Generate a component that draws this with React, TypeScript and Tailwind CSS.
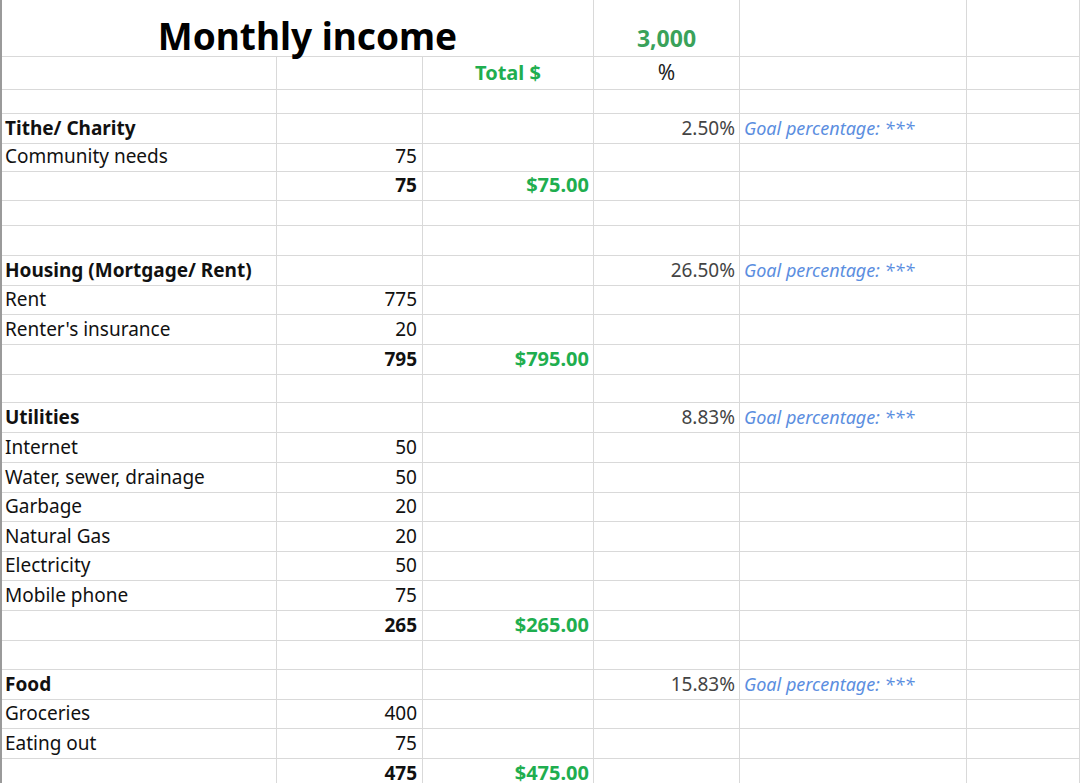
import React from "react";

type Row = {
  h: number;
  a?: string;
  aBold?: boolean;
  b?: string;
  bBold?: boolean;
  c?: string;
  d?: string;
  goal?: boolean;
};

const rows: Row[] = [
  { h: 29, c: "Total $" },
  { h: 28 },
  { h: 28, a: "Tithe/ Charity", aBold: true, d: "2.50%", goal: true },
  { h: 28, a: "Community needs", b: "75" },
  { h: 28, b: "75", bBold: true, c: "$75.00" },
  { h: 28 },
  { h: 30 },
  { h: 29, a: "Housing (Mortgage/ Rent)", aBold: true, d: "26.50%", goal: true },
  { h: 30, a: "Rent", b: "775" },
  { h: 29, a: "Renter's insurance", b: "20" },
  { h: 30, b: "795", bBold: true, c: "$795.00" },
  { h: 29 },
  { h: 30, a: "Utilities", aBold: true, d: "8.83%", goal: true },
  { h: 30, a: "Internet", b: "50" },
  { h: 29, a: "Water, sewer, drainage", b: "50" },
  { h: 30, a: "Garbage", b: "20" },
  { h: 29, a: "Natural Gas", b: "20" },
  { h: 30, a: "Electricity", b: "50" },
  { h: 29, a: "Mobile phone", b: "75" },
  { h: 30, b: "265", bBold: true, c: "$265.00" },
  { h: 30 },
  { h: 29, a: "Food", aBold: true, d: "15.83%", goal: true },
  { h: 30, a: "Groceries", b: "400" },
  { h: 29, a: "Eating out", b: "75" },
  { h: 30, b: "475", bBold: true, c: "$475.00" },
];

const serif = "[font-family:'Liberation_Serif',serif]";
const sans = "[font-family:'Lato','Liberation_Sans',sans-serif]";
const cell = "border-r border-b border-[#d9d9d9] flex items-center overflow-visible whitespace-nowrap";

export default function App() {
  return (
    <div className="w-[1080px] h-[783px] overflow-hidden bg-white border-l-2 border-[#9a9a9a]">
      <div className="grid grid-cols-[275px_146px_171px_146px_227px_113px] h-[57px]">
        <div className="col-span-3 border-r border-b border-[#d9d9d9] flex items-end justify-center pb-[2px] pl-[20px]">
          <span className={`${serif} font-bold text-[37px] leading-none text-black`}>Monthly income</span>
        </div>
        <div className={`${cell} justify-center items-end pb-[6px]`}>
          <span className={`${serif} font-bold text-[23px] text-[#3aa25a] leading-none`}>3,000</span>
        </div>
        <div className={cell}></div>
        <div className={cell}></div>
      </div>
      {rows.map((r, i) => (
        <div key={i} className="grid grid-cols-[275px_146px_171px_146px_227px_113px]" style={{ height: r.h }}>
          <div className={`${cell} pl-[3px]`}>
            {r.a && (
              <span className={`${serif} text-[19px] text-[#111] ${r.aBold ? "font-bold" : ""}`}>{r.a}</span>
            )}
          </div>
          <div className={`${cell} justify-end pr-[5px]`}>
            {r.b && (
              <span className={`${serif} text-[19px] text-[#111] ${r.bBold ? "font-bold" : ""}`}>{r.b}</span>
            )}
          </div>
          <div className={`${cell} ${i === 0 ? "justify-center" : "justify-end pr-[4px]"}`}>
            {r.c && <span className={`${serif} font-bold text-[20px] text-[#1fae4f]`}>{r.c}</span>}
          </div>
          <div className={`${cell} ${i === 0 ? "justify-center" : "justify-end pr-[4px]"}`}>
            {i === 0 && <span className={`${sans} text-[21px] text-[#222]`}>%</span>}
            {r.d && <span className={`${sans} text-[19px] text-[#444]`}>{r.d}</span>}
          </div>
          <div className={`${cell} pl-[4px]`}>
            {r.goal && (
              <span className={`${serif} italic text-[18px] text-[#5b8ee0]`}>Goal percentage: ***</span>
            )}
          </div>
          <div className={cell}></div>
        </div>
      ))}
    </div>
  );
}
